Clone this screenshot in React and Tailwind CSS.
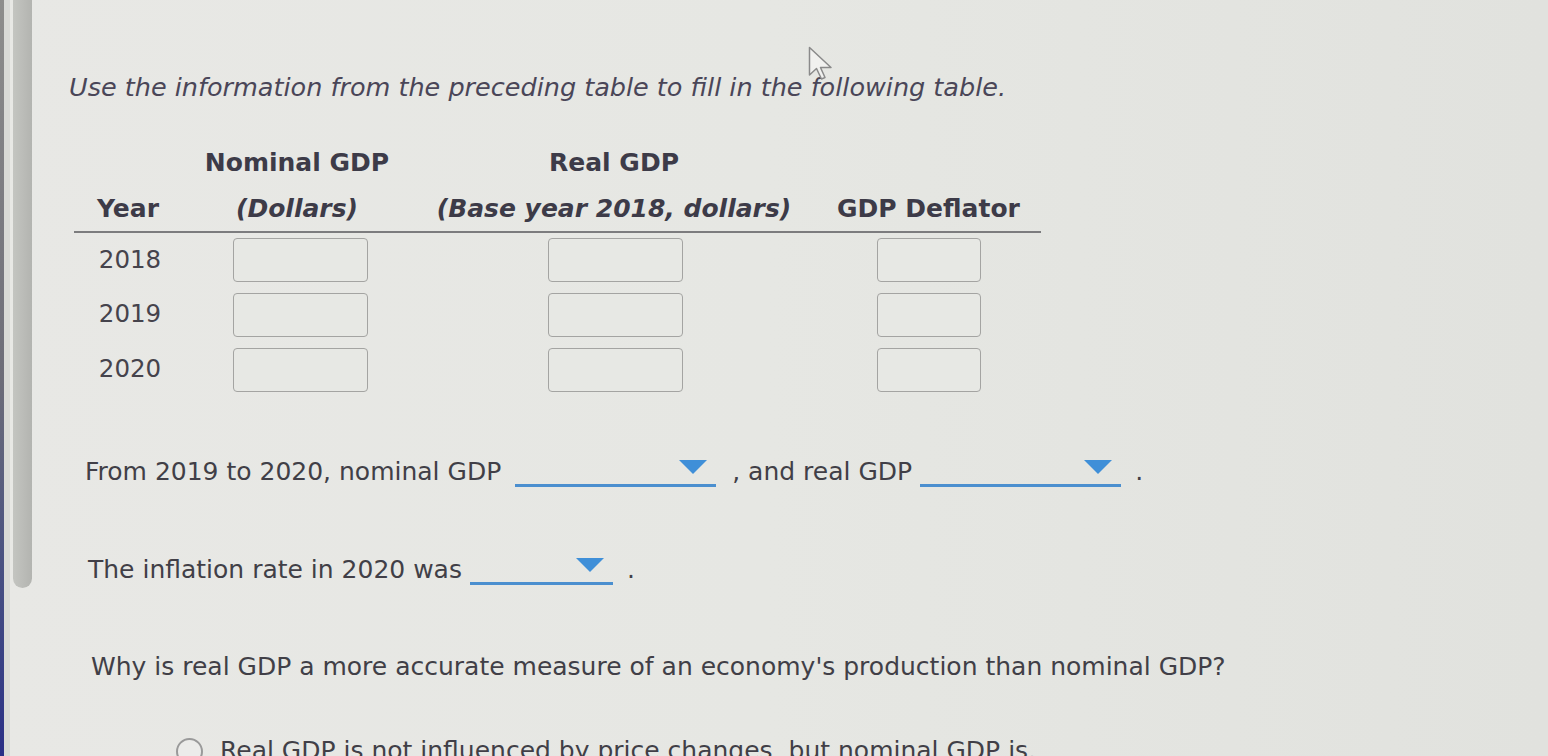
import React from "react";

function Dropdown({ width, tri = 28 }) {
  return (
    <span
      className="inline-flex items-start justify-end border-b-[3px] border-[#4b8fcf] align-baseline h-[30px] pr-[9px]"
      style={{ width }}
    >
      <svg width={tri} height="14" viewBox="0 0 28 14" className="mt-[3px]">
        <polygon points="0,0 28,0 14,14" fill="#3f8fd8" />
      </svg>
    </span>
  );
}

function Box({ w }) {
  return (
    <div
      className="h-[44px] rounded-[4px] border-[1.5px] border-[#a4a4a2] bg-[#e7e8e4]"
      style={{ width: w }}
    />
  );
}

export default function App() {
  const rows = ["2018", "2019", "2020"];
  return (
    <div
      className="relative w-[1548px] h-[756px] overflow-hidden flex bg-linear-to-r from-[#e8e8e5] via-[#e6e7e3] to-[#e1e2de] text-[#413f47]"
      style={{ fontFamily: '"DejaVu Sans", Verdana, sans-serif' }}
    >
      {/* left edge / scrollbar */}
      <div className="relative w-[34px] h-full shrink-0 flex">
        <div className="w-[4px] h-full bg-linear-to-b from-[#8e8e8c] via-[#6d6d78] to-[#2b2f86]" />
        <div className="w-[6px] h-full bg-[#d9dad6]" />
        <div className="w-[19px] h-[588px] ml-[3px] rounded-b-full bg-linear-to-r from-[#c4c5c1] to-[#b3b4b0]" />
      </div>

      <div className="flex flex-col items-start pl-[35px] pt-[72px]">
        <p className="italic text-[25.5px] leading-[30px] text-[#4a4658] whitespace-nowrap">
          Use the information from the preceding table to fill in the following table.
        </p>

        <table className="mt-[38px] ml-[5px] w-[967px] table-fixed border-collapse text-[25px] text-[#3d3b48]">
          <colgroup>
            <col className="w-[108px]" />
            <col className="w-[230px]" />
            <col className="w-[404px]" />
            <col className="w-[225px]" />
          </colgroup>
          <thead>
            <tr className="h-[46px]">
              <th />
              <th className="font-bold text-center whitespace-nowrap">Nominal GDP</th>
              <th className="font-bold text-center whitespace-nowrap">Real GDP</th>
              <th />
            </tr>
            <tr className="h-[46px] border-b-2 border-[#7c7c7e]">
              <th className="font-bold text-center">Year</th>
              <th className="font-bold italic text-center whitespace-nowrap">(Dollars)</th>
              <th className="font-bold italic text-center whitespace-nowrap">(Base year 2018, dollars)</th>
              <th className="font-bold text-center whitespace-nowrap">GDP Deflator</th>
            </tr>
          </thead>
          <tbody className="text-[24.5px] text-[#45434c]">
            {rows.map((y) => (
              <tr key={y} className="h-[55px]">
                <td className="text-center font-normal pl-[4px]">{y}</td>
                <td>
                  <div className="flex justify-center pl-[6px]">
                    <Box w={135} />
                  </div>
                </td>
                <td>
                  <div className="flex justify-center pl-[2px]">
                    <Box w={135} />
                  </div>
                </td>
                <td>
                  <div className="flex justify-center">
                    <Box w={104} />
                  </div>
                </td>
              </tr>
            ))}
          </tbody>
        </table>

        <div className="mt-[54px] ml-[16px] text-[25px] leading-[30px] whitespace-nowrap flex items-end">
          <span>From 2019 to 2020, nominal GDP</span>
          <span className="ml-[14px]"><Dropdown width={201} /></span>
          <span className="ml-[16px]">, and real GDP</span>
          <span className="ml-[8px]"><Dropdown width={201} /></span>
          <span className="ml-[14px]">.</span>
        </div>

        <div className="mt-[62px] ml-[19px] text-[25px] leading-[30px] whitespace-nowrap flex items-end">
          <span>The inflation rate in 2020 was</span>
          <span className="ml-[8px]"><Dropdown width={143} /></span>
          <span className="ml-[14px]">.</span>
        </div>

        <p className="mt-[67px] ml-[22px] text-[25px] leading-[30px] whitespace-nowrap">
          Why is real GDP a more accurate measure of an economy's production than nominal GDP?
        </p>

        <label className="mt-[54px] ml-[107px] flex items-center text-[25px] leading-[30px] whitespace-nowrap">
          <span className="w-[27px] h-[27px] rounded-full border-2 border-[#9a9a9a] bg-[#ececea] shrink-0" />
          <span className="ml-[17px]">Real GDP is not influenced by price changes, but nominal GDP is.</span>
        </label>
      </div>

      {/* mouse cursor */}
      <svg
        className="absolute left-[808px] top-[46px]"
        width="26"
        height="36"
        viewBox="0 0 26 36"
      >
        <path
          d="M1.5 1.5 L1.5 29 L8.5 22.5 L13.5 33 L17 31.5 L12.5 21.5 L23 21.5 Z"
          fill="#f1f1ef"
          stroke="#8a8a8a"
          strokeWidth="1.5"
          strokeLinejoin="round"
        />
      </svg>
    </div>
  );
}
